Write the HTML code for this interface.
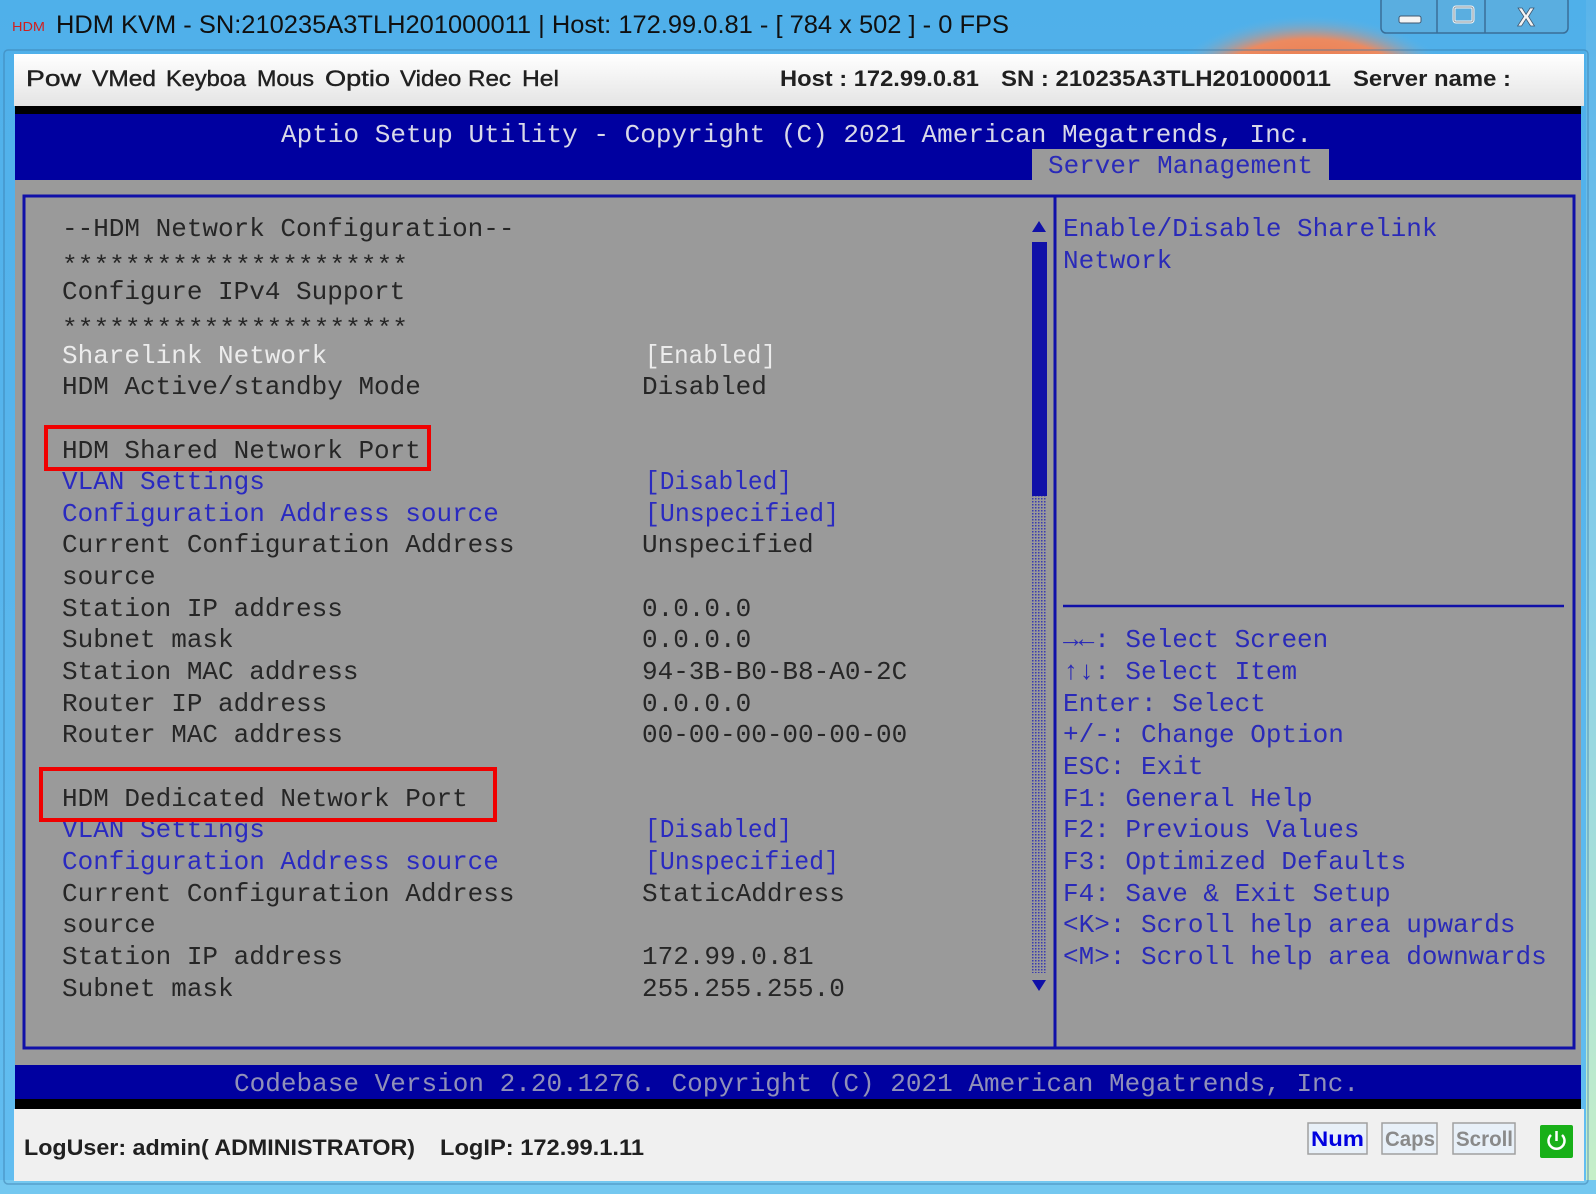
<!DOCTYPE html>
<html><head><meta charset="utf-8"><style>
html,body{margin:0;padding:0;width:1596px;height:1194px;overflow:hidden;background:#6cc0ec}
svg{display:block}
.m{font-family:"Liberation Mono","DejaVu Sans Mono",monospace;font-size:26px}
.s{font-family:"Liberation Sans",sans-serif}
</style></head><body>
<svg width="1596" height="1194" viewBox="0 0 1596 1194" xmlns="http://www.w3.org/2000/svg" xml:space="preserve">
<defs>
<linearGradient id="tb" x1="0" y1="0" x2="0" y2="1"><stop offset="0" stop-color="#4fb0ea"/><stop offset="1" stop-color="#62bdf0"/></linearGradient>
<radialGradient id="sun" cx="0.5" cy="0.5" r="0.5"><stop offset="0" stop-color="#e87040"/><stop offset="0.7" stop-color="#ec8a60"/><stop offset="1" stop-color="#5ab4ea" stop-opacity="0"/></radialGradient>
<linearGradient id="menu" x1="0" y1="0" x2="0" y2="1"><stop offset="0" stop-color="#ffffff"/><stop offset="1" stop-color="#e4e4e4"/></linearGradient>
<linearGradient id="side" x1="0" y1="0" x2="0" y2="1"><stop offset="0" stop-color="#5ab4ea"/><stop offset="0.5" stop-color="#8ad0e8"/><stop offset="1" stop-color="#c8f0c8"/></linearGradient>
<pattern id="dots" width="3" height="3" patternUnits="userSpaceOnUse"><rect width="3" height="3" fill="#9a9a9a"/><rect width="1.5" height="1.5" fill="#3a3ab0"/></pattern>
</defs>
<rect x="0" y="0" width="1596" height="1194" fill="url(#tb)"/>
<ellipse cx="1310" cy="95" rx="150" ry="80" fill="url(#sun)"/>
<rect x="1586" y="0" width="10" height="1194" fill="url(#side)"/>
<rect x="0" y="1180" width="1596" height="14" fill="#74c8f0"/>
<rect x="4" y="50" width="1584" height="1134" rx="4" fill="none" stroke="#3a7aa8" stroke-width="1.5" opacity="0.5"/>
<rect x="1381" y="-4" width="187" height="37" rx="5" fill="#5aaee0" stroke="#3a6e98" stroke-width="1.5"/>
<line x1="1437" y1="0" x2="1437" y2="33" stroke="#3a6e98" stroke-width="1.5"/>
<line x1="1485" y1="0" x2="1485" y2="33" stroke="#3a6e98" stroke-width="1.5"/>
<rect x="1399" y="16" width="22" height="7" rx="2" fill="#f4f4f4" stroke="#405870"/>
<rect x="1454" y="7" width="19" height="15" rx="2" fill="none" stroke="#f4f4f4" stroke-width="3"/>
<rect x="1454" y="7" width="19" height="15" rx="2" fill="none" stroke="#405870" stroke-width="1" opacity="0.6"/>
<text x="1526" y="26" class="s" font-size="26" font-weight="bold" fill="#f4f4f4" stroke="#405870" stroke-width="0.8" text-anchor="middle">X</text>
<text x="12" y="31" class="s" font-size="13" fill="#d02020" textLength="33" lengthAdjust="spacingAndGlyphs">HDM</text>
<text x="56" y="33" class="s" font-size="25" fill="#101010" textLength="953" lengthAdjust="spacingAndGlyphs">HDM KVM - SN:210235A3TLH201000011 | Host: 172.99.0.81 - [ 784 x 502 ] - 0 FPS</text>
<rect x="14" y="54" width="1570" height="52" fill="url(#menu)"/>
<g class="s" font-size="22" fill="#202020" stroke="#202020" stroke-width="0.4">
<text x="26" y="86" textLength="55" lengthAdjust="spacingAndGlyphs">Pow</text>
<text x="92" y="86" textLength="64" lengthAdjust="spacingAndGlyphs">VMed</text>
<text x="166" y="86" textLength="80" lengthAdjust="spacingAndGlyphs">Keyboa</text>
<text x="257" y="86" textLength="57" lengthAdjust="spacingAndGlyphs">Mous</text>
<text x="325" y="86" textLength="65" lengthAdjust="spacingAndGlyphs">Optio</text>
<text x="400" y="86" textLength="111" lengthAdjust="spacingAndGlyphs">Video Rec</text>
<text x="522" y="86" textLength="37" lengthAdjust="spacingAndGlyphs">Hel</text>
<text x="780" y="86" textLength="199" lengthAdjust="spacingAndGlyphs" font-weight="bold" stroke-width="0">Host : 172.99.0.81</text>
<text x="1001" y="86" textLength="330" lengthAdjust="spacingAndGlyphs" font-weight="bold" stroke-width="0">SN : 210235A3TLH201000011</text>
<text x="1353" y="86" textLength="158" lengthAdjust="spacingAndGlyphs" font-weight="bold" stroke-width="0">Server name :</text>
</g>
<rect x="15" y="106" width="1566" height="1003" fill="#000"/>
<rect x="15" y="114" width="1566" height="66" fill="#0000a0"/>
<rect x="15" y="180" width="1566" height="904" fill="#9a9a9a"/>
<rect x="15" y="1065" width="1566" height="34" fill="#0000a0"/>
<rect x="1032" y="149" width="297" height="31" fill="#9a9a9a"/>
<rect x="24" y="196" width="1550" height="852" fill="none" stroke="#1010a8" stroke-width="3"/>
<line x1="1055" y1="196" x2="1055" y2="1048" stroke="#1010a8" stroke-width="3"/>
<line x1="1063" y1="606" x2="1564" y2="606" stroke="#1010a8" stroke-width="2.5"/>
<polygon points="1039,221 1046,232 1032,232" fill="#1010a8"/>
<rect x="1032" y="242" width="15" height="254" fill="#1010a8"/>
<rect x="1032" y="496" width="15" height="477" fill="url(#dots)"/>
<polygon points="1032,980 1046,980 1039,991" fill="#1010a8"/>
<g class="m">
<text x="281" y="142" fill="#d8d8e8" textLength="1031" lengthAdjust="spacingAndGlyphs">Aptio Setup Utility - Copyright (C) 2021 American Megatrends, Inc.</text>
<text x="1048" y="173" fill="#2a2ab8" textLength="265" lengthAdjust="spacingAndGlyphs">Server Management</text>
<text x="234" y="1091" fill="#9090b8" textLength="1125" lengthAdjust="spacingAndGlyphs">Codebase Version 2.20.1276. Copyright (C) 2021 American Megatrends, Inc.</text>
</g>
<g class="m" fill="#262626">
<text x="62" y="236">--HDM Network Configuration--</text>
<text x="62" y="272" font-size="24" textLength="346" lengthAdjust="spacingAndGlyphs">**********************</text>
<text x="62" y="299">Configure IPv4 Support</text>
<text x="62" y="335" font-size="24" textLength="346" lengthAdjust="spacingAndGlyphs">**********************</text>
<text x="62" y="363" fill="#ececec">Sharelink Network</text>
<text x="645" y="363" fill="#ececec" textLength="131" lengthAdjust="spacingAndGlyphs">[Enabled]</text>
<text x="62" y="394">HDM Active/standby Mode</text>
<text x="642" y="394">Disabled</text>
<text x="62" y="458">HDM Shared Network Port</text>
<text x="62" y="489" fill="#2a2ac0">VLAN Settings</text>
<text x="645" y="489" fill="#2a2ac0" textLength="147" lengthAdjust="spacingAndGlyphs">[Disabled]</text>
<text x="62" y="521" fill="#2a2ac0">Configuration Address source</text>
<text x="645" y="521" fill="#2a2ac0" textLength="194" lengthAdjust="spacingAndGlyphs">[Unspecified]</text>
<text x="62" y="552">Current Configuration Address</text>
<text x="642" y="552">Unspecified</text>
<text x="62" y="584">source</text>
<text x="62" y="616">Station IP address</text>
<text x="642" y="616">0.0.0.0</text>
<text x="62" y="647">Subnet mask</text>
<text x="642" y="647">0.0.0.0</text>
<text x="62" y="679">Station MAC address</text>
<text x="642" y="679">94-3B-B0-B8-A0-2C</text>
<text x="62" y="711">Router IP address</text>
<text x="642" y="711">0.0.0.0</text>
<text x="62" y="742">Router MAC address</text>
<text x="642" y="742">00-00-00-00-00-00</text>
<text x="62" y="806">HDM Dedicated Network Port</text>
<text x="62" y="837" fill="#2a2ac0">VLAN Settings</text>
<text x="645" y="837" fill="#2a2ac0" textLength="147" lengthAdjust="spacingAndGlyphs">[Disabled]</text>
<text x="62" y="869" fill="#2a2ac0">Configuration Address source</text>
<text x="645" y="869" fill="#2a2ac0" textLength="194" lengthAdjust="spacingAndGlyphs">[Unspecified]</text>
<text x="62" y="901">Current Configuration Address</text>
<text x="642" y="901">StaticAddress</text>
<text x="62" y="932">source</text>
<text x="62" y="964">Station IP address</text>
<text x="642" y="964">172.99.0.81</text>
<text x="62" y="996">Subnet mask</text>
<text x="642" y="996">255.255.255.0</text>
</g>
<g class="m" fill="#2a2ab8">
<text x="1063" y="236">Enable/Disable Sharelink</text>
<text x="1063" y="268">Network</text>
<text x="1063" y="647"><tspan font-weight="bold">→←</tspan>: Select Screen</text>
<text x="1063" y="679"><tspan font-weight="bold">↑↓</tspan>: Select Item</text>
<text x="1063" y="711">Enter: Select</text>
<text x="1063" y="742">+/-: Change Option</text>
<text x="1063" y="774">ESC: Exit</text>
<text x="1063" y="806">F1: General Help</text>
<text x="1063" y="837">F2: Previous Values</text>
<text x="1063" y="869">F3: Optimized Defaults</text>
<text x="1063" y="901">F4: Save &amp; Exit Setup</text>
<text x="1063" y="932">&lt;K&gt;: Scroll help area upwards</text>
<text x="1063" y="964">&lt;M&gt;: Scroll help area downwards</text>
</g>
<rect x="46" y="427" width="383" height="42" fill="none" stroke="#f00000" stroke-width="4"/>
<rect x="41" y="769" width="454" height="51" fill="none" stroke="#f00000" stroke-width="4"/>
<rect x="14" y="1109" width="1570" height="72" fill="#f0f0f0"/>
<g class="s" font-size="22" font-weight="bold" fill="#202020">
<text x="24" y="1155" textLength="391" lengthAdjust="spacingAndGlyphs">LogUser: admin( ADMINISTRATOR)</text>
<text x="440" y="1155" textLength="204" lengthAdjust="spacingAndGlyphs">LogIP: 172.99.1.11</text>
</g>
<rect x="1308" y="1123" width="59" height="31" fill="#e8f0f8" stroke="#a0a0a0" stroke-width="1.5"/>
<rect x="1382" y="1123" width="55" height="31" fill="#e8f0f8" stroke="#a0a0a0" stroke-width="1.5"/>
<rect x="1453" y="1123" width="62" height="31" fill="#e8f0f8" stroke="#a0a0a0" stroke-width="1.5"/>
<g class="s" font-size="21" font-weight="bold">
<text x="1311" y="1146" fill="#0000e0" textLength="53" lengthAdjust="spacingAndGlyphs">Num</text>
<text x="1385" y="1146" fill="#8a8a8a" textLength="50" lengthAdjust="spacingAndGlyphs">Caps</text>
<text x="1456" y="1146" fill="#8a8a8a" textLength="57" lengthAdjust="spacingAndGlyphs">Scroll</text>
</g>
<rect x="1540" y="1125" width="33" height="33" rx="2" fill="#18b018"/>
<path d="M1551 1135 A8 8 0 1 0 1562 1135" fill="none" stroke="#fff" stroke-width="2.5"/>
<line x1="1556.5" y1="1131" x2="1556.5" y2="1141" stroke="#fff" stroke-width="2.5"/>
</svg>
</body></html>
